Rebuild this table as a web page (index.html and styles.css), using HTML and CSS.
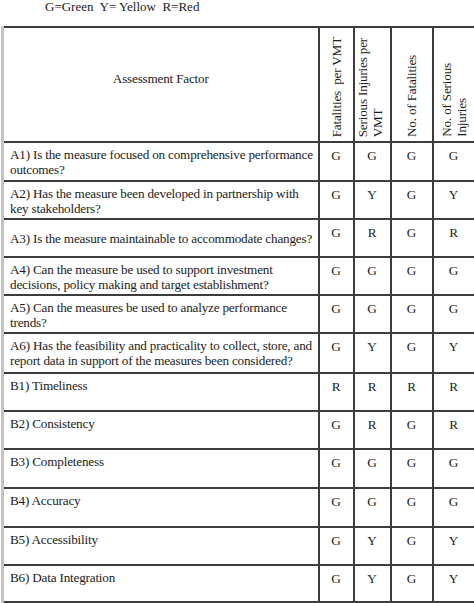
FILE: index.html
```html
<!DOCTYPE html>
<html>
<head>
<meta charset="utf-8">
<link rel="stylesheet" href="styles.css">
</head>
<body>
<div class="legend">G=Green&nbsp; Y= Yellow&nbsp; R=Red</div>
<table class="grid">
  <colgroup>
    <col class="c-factor"><col class="c1"><col class="c2"><col class="c3"><col class="c4">
  </colgroup>
  <thead>
    <tr class="head">
      <th class="factor-head">Assessment Factor</th>
      <th class="rot"><div class="vt">Fatalities&nbsp; per VMT</div></th>
      <th class="rot rot-left"><div class="vt">Serious Injuries per<br>VMT</div></th>
      <th class="rot"><div class="vt">No. of Fatalities</div></th>
      <th class="rot"><div class="vt">No. of Serious<br>Injuries</div></th>
    </tr>
  </thead>
  <tbody>
    <tr class="h39"><td class="q">A1) Is the measure focused on comprehensive performance outcomes?</td><td>G</td><td>G</td><td>G</td><td>G</td></tr>
    <tr class="h38"><td class="q">A2) Has the measure been developed in partnership with key stakeholders?</td><td>G</td><td>Y</td><td>G</td><td>Y</td></tr>
    <tr class="h38"><td class="q mid">A3) Is the measure maintainable to accommodate changes?</td><td>G</td><td>R</td><td>G</td><td>R</td></tr>
    <tr class="h38"><td class="q">A4) Can the measure be used to support investment decisions, policy making and target establishment?</td><td>G</td><td>G</td><td>G</td><td>G</td></tr>
    <tr class="h38"><td class="q">A5) Can the measures be used to analyze performance trends?</td><td>G</td><td>G</td><td>G</td><td>G</td></tr>
    <tr class="h40"><td class="q">A6) Has the feasibility and practicality to collect, store, and report data in support of the measures been considered?</td><td>G</td><td>Y</td><td>G</td><td>Y</td></tr>
    <tr class="h38"><td class="q">B1) Timeliness</td><td>R</td><td>R</td><td>R</td><td>R</td></tr>
    <tr class="h38"><td class="q">B2) Consistency</td><td>G</td><td>R</td><td>G</td><td>R</td></tr>
    <tr class="h39"><td class="q">B3) Completeness</td><td>G</td><td>G</td><td>G</td><td>G</td></tr>
    <tr class="h39"><td class="q">B4) Accuracy</td><td>G</td><td>G</td><td>G</td><td>G</td></tr>
    <tr class="h38"><td class="q">B5) Accessibility</td><td>G</td><td>Y</td><td>G</td><td>Y</td></tr>
    <tr class="h37"><td class="q">B6) Data Integration</td><td>G</td><td>Y</td><td>G</td><td>Y</td></tr>
  </tbody>
</table>
</body>
</html>
```
FILE: styles.css
```css
html, body {
  margin: 0;
  padding: 0;
  background: #ffffff;
}
body {
  font-family: "Liberation Serif", "Times New Roman", serif;
  font-size: 13.2px;
  line-height: 15px;
  letter-spacing: -0.2px;
  color: #1c1c1c;
  width: 474px;
  height: 603px;
  overflow: hidden;
}
.legend {
  height: 26px;
  font-size: 13px;
  line-height: 13px;
  padding-left: 45px;
  letter-spacing: 0;
  white-space: pre;
}
.grid {
  border-collapse: collapse;
  table-layout: fixed;
  width: 474px;
  margin-left: 1px;
}
.c-factor { width: 316px; }
.c1 { width: 35px; }
.c2 { width: 37px; }
.c3 { width: 42px; }
.c4 { width: 42px; }
.grid th, .grid td {
  border: 2px solid #3c3c3c;
  padding: 0;
  font-weight: normal;
}
.grid th:first-child, .grid td:first-child {
  border-left: 3px solid #c4c4c4;
}
.head { height: 115px; }
.grid .factor-head {
  text-align: center;
  vertical-align: top;
  padding-top: 43px;
}
.grid .rot {
  vertical-align: bottom;
  text-align: center;
  padding-bottom: 1px;
}
.grid .rot-left {
  padding-right: 6px;
}
.vt {
  display: inline-block;
  writing-mode: vertical-rl;
  transform: rotate(180deg);
  text-align: left;
  white-space: nowrap;
}
.grid td {
  vertical-align: top;
  text-align: center;
  padding-top: 5px;
}
.grid td.q {
  text-align: left;
  padding: 4px 2px 0 6px;
}
.grid td.q.mid {
  vertical-align: middle;
  padding-top: 0;
}
.h37 { height: 37px; }
.h38 { height: 38px; }
.h39 { height: 39px; }
.h40 { height: 40px; }
```
